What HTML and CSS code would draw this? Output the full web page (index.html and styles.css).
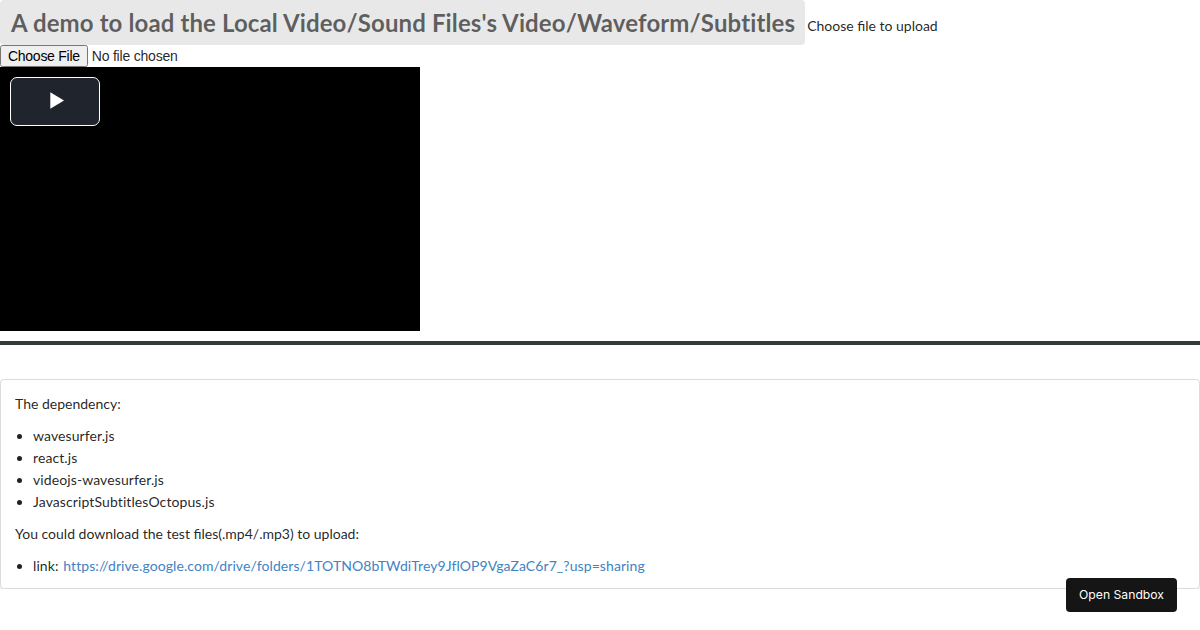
FILE: index.html
```html
<!DOCTYPE html>
<html lang="en">
<head>
  <meta charset="UTF-8">
  <title>Video Waveform Subtitles Demo</title>
  <link rel="stylesheet" href="styles.css">
</head>
<body>
  <div class="upload-head">
    <h2 class="demo-title">A demo to load the Local Video/Sound Files's Video/Waveform/Subtitles</h2>
    <label class="upload-label" for="file-input">Choose file to upload</label>
  </div>
  <input class="file-input" type="file" id="file-input">

  <div class="video-box">
    <button class="big-play" type="button" aria-label="Play">
      <svg width="14" height="17" viewBox="0 0 14 17"><path d="M0.3 0.3 L14 8.5 L0.3 16.7 Z" fill="#fff"/></svg>
    </button>
  </div>

  <hr class="divider">

  <div class="info-card">
    <p>The dependency:</p>
    <ul class="dep-list">
      <li>wavesurfer.js</li>
      <li>react.js</li>
      <li>videojs-wavesurfer.js</li>
      <li>JavascriptSubtitlesOctopus.js</li>
    </ul>
    <p>You could download the test files(.mp4/.mp3) to upload:</p>
    <ul class="dep-list">
      <li>link: <a href="#">https://drive.google.com/drive/folders/1TOTNO8bTWdiTrey9JflOP9VgaZaC6r7_?usp=sharing</a></li>
    </ul>
  </div>

  <a class="sandbox-btn" href="#">Open Sandbox</a>
</body>
</html>
```

FILE: styles.css
```css
body {
  margin: 0;
  font-family: "Lato", "Liberation Sans", sans-serif;
  font-size: 14px;
  line-height: 1.4285em;
  color: rgba(0, 0, 0, 0.87);
  background: #fff;
  overflow: hidden;
}
.upload-head {
  display: flex;
  align-items: flex-end;
  gap: 2px;
  height: 45px;
}
.demo-title {
  margin: 0;
  height: 45px;
  padding: 0 10px 0 11px;
  box-sizing: border-box;
  font-size: 24px;
  line-height: 45px;
  font-weight: 700;
  letter-spacing: 0.115px;
  white-space: nowrap;
  color: rgba(0, 0, 0, 0.6);
  background: #e8e8e8;
  border-radius: 4px;
}
.upload-label {
  margin-bottom: 9px;
}
.file-input {
  display: block;
  height: 22px;
  font-family: "Liberation Sans", Arial, sans-serif;
  font-size: 14px;
  letter-spacing: -0.2px;
}
.file-input::file-selector-button {
  letter-spacing: -0.27px;
}
.video-box {
  width: 420px;
  height: 264px;
  padding: 10px;
  box-sizing: border-box;
  background: #000;
}
.big-play {
  display: flex;
  align-items: center;
  justify-content: center;
  width: 90px;
  height: 49px;
  padding: 0 0 3px 4px;
  box-sizing: border-box;
  background: #20252d;
  border: 1px solid #fff;
  border-radius: 7px;
}
.divider {
  height: 4px;
  margin: 10px 0 34px;
  border: 0;
  background: #333a3a;
}
.info-card {
  height: 210px;
  padding: 13px 14px;
  box-sizing: border-box;
  border: 1px solid #dcdcdc;
  border-radius: 4px;
  box-shadow: 0 1px 2px rgba(34, 36, 38, 0.15);
}
.info-card p {
  margin: 0 0 10px;
  line-height: 22px;
}
.info-card ul {
  margin: 0 0 10px;
  padding-left: 18px;
}
.dep-list li {
  line-height: 22px;
  letter-spacing: 0.1px;
}
.info-card a {
  margin-left: 1px;
  letter-spacing: 0.08px;
  color: #4183c4;
  text-decoration: none;
}
.sandbox-btn {
  position: fixed;
  left: 1066px;
  top: 578px;
  width: 111px;
  height: 34px;
  box-sizing: border-box;
  font-family: "Inter", "Liberation Sans", sans-serif;
  font-size: 12.2px;
  line-height: 34px;
  text-align: center;
  color: #fff;
  text-decoration: none;
  background: #151515;
  border-radius: 4px;
}
```
